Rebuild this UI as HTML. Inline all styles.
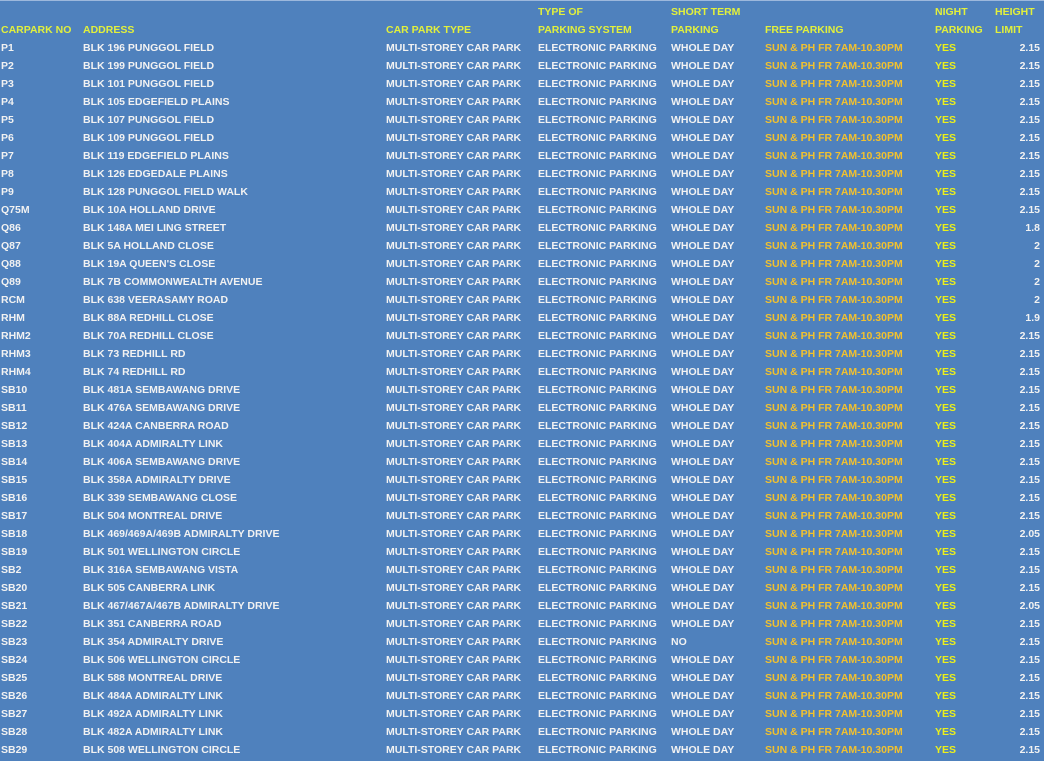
<!DOCTYPE html>
<html><head><meta charset="utf-8"><style>
html,body{margin:0;padding:0}
body{width:1044px;height:761px;background:#4f81bd;overflow:hidden;position:relative;font-family:"Liberation Sans",sans-serif;font-weight:bold;font-size:10.5px;color:#f2f2f2;border-top:1px solid #9db8dc;box-sizing:border-box}
.r{position:absolute;left:0;width:1044px;height:18px;line-height:18px;white-space:nowrap}
.r span{position:absolute;top:2px}
.a{left:1px}.b{left:83px}.c{left:386px}.d{left:538px}.e{left:671px}.f{left:765px;color:#f2c12e}.g{left:935px;color:#ecf01a}.h{right:4px;text-align:right}
.hd span{color:#e2f03c !important}
</style></head><body>
<div class="r hd" style="top:0px"><span class="d">TYPE OF</span><span class="e">SHORT TERM</span><span class="g">NIGHT</span><span class="h" style="left:995px;right:auto">HEIGHT</span></div>
<div class="r hd" style="top:18px"><span class="a">CARPARK NO</span><span class="b">ADDRESS</span><span class="c">CAR PARK TYPE</span><span class="d">PARKING SYSTEM</span><span class="e">PARKING</span><span class="f">FREE PARKING</span><span class="g">PARKING</span><span class="h" style="left:995px;right:auto">LIMIT</span></div>
<div class="r" style="top:36px"><span class="a">P1</span><span class="b">BLK 196 PUNGGOL FIELD</span><span class="c">MULTI-STOREY CAR PARK</span><span class="d">ELECTRONIC PARKING</span><span class="e">WHOLE DAY</span><span class="f">SUN &amp; PH FR 7AM-10.30PM</span><span class="g">YES</span><span class="h">2.15</span></div>
<div class="r" style="top:54px"><span class="a">P2</span><span class="b">BLK 199 PUNGGOL FIELD</span><span class="c">MULTI-STOREY CAR PARK</span><span class="d">ELECTRONIC PARKING</span><span class="e">WHOLE DAY</span><span class="f">SUN &amp; PH FR 7AM-10.30PM</span><span class="g">YES</span><span class="h">2.15</span></div>
<div class="r" style="top:72px"><span class="a">P3</span><span class="b">BLK 101 PUNGGOL FIELD</span><span class="c">MULTI-STOREY CAR PARK</span><span class="d">ELECTRONIC PARKING</span><span class="e">WHOLE DAY</span><span class="f">SUN &amp; PH FR 7AM-10.30PM</span><span class="g">YES</span><span class="h">2.15</span></div>
<div class="r" style="top:90px"><span class="a">P4</span><span class="b">BLK 105 EDGEFIELD PLAINS</span><span class="c">MULTI-STOREY CAR PARK</span><span class="d">ELECTRONIC PARKING</span><span class="e">WHOLE DAY</span><span class="f">SUN &amp; PH FR 7AM-10.30PM</span><span class="g">YES</span><span class="h">2.15</span></div>
<div class="r" style="top:108px"><span class="a">P5</span><span class="b">BLK 107 PUNGGOL FIELD</span><span class="c">MULTI-STOREY CAR PARK</span><span class="d">ELECTRONIC PARKING</span><span class="e">WHOLE DAY</span><span class="f">SUN &amp; PH FR 7AM-10.30PM</span><span class="g">YES</span><span class="h">2.15</span></div>
<div class="r" style="top:126px"><span class="a">P6</span><span class="b">BLK 109 PUNGGOL FIELD</span><span class="c">MULTI-STOREY CAR PARK</span><span class="d">ELECTRONIC PARKING</span><span class="e">WHOLE DAY</span><span class="f">SUN &amp; PH FR 7AM-10.30PM</span><span class="g">YES</span><span class="h">2.15</span></div>
<div class="r" style="top:144px"><span class="a">P7</span><span class="b">BLK 119 EDGEFIELD PLAINS</span><span class="c">MULTI-STOREY CAR PARK</span><span class="d">ELECTRONIC PARKING</span><span class="e">WHOLE DAY</span><span class="f">SUN &amp; PH FR 7AM-10.30PM</span><span class="g">YES</span><span class="h">2.15</span></div>
<div class="r" style="top:162px"><span class="a">P8</span><span class="b">BLK 126 EDGEDALE PLAINS</span><span class="c">MULTI-STOREY CAR PARK</span><span class="d">ELECTRONIC PARKING</span><span class="e">WHOLE DAY</span><span class="f">SUN &amp; PH FR 7AM-10.30PM</span><span class="g">YES</span><span class="h">2.15</span></div>
<div class="r" style="top:180px"><span class="a">P9</span><span class="b">BLK 128 PUNGGOL FIELD WALK</span><span class="c">MULTI-STOREY CAR PARK</span><span class="d">ELECTRONIC PARKING</span><span class="e">WHOLE DAY</span><span class="f">SUN &amp; PH FR 7AM-10.30PM</span><span class="g">YES</span><span class="h">2.15</span></div>
<div class="r" style="top:198px"><span class="a">Q75M</span><span class="b">BLK 10A HOLLAND DRIVE</span><span class="c">MULTI-STOREY CAR PARK</span><span class="d">ELECTRONIC PARKING</span><span class="e">WHOLE DAY</span><span class="f">SUN &amp; PH FR 7AM-10.30PM</span><span class="g">YES</span><span class="h">2.15</span></div>
<div class="r" style="top:216px"><span class="a">Q86</span><span class="b">BLK 148A MEI LING STREET</span><span class="c">MULTI-STOREY CAR PARK</span><span class="d">ELECTRONIC PARKING</span><span class="e">WHOLE DAY</span><span class="f">SUN &amp; PH FR 7AM-10.30PM</span><span class="g">YES</span><span class="h">1.8</span></div>
<div class="r" style="top:234px"><span class="a">Q87</span><span class="b">BLK 5A HOLLAND CLOSE</span><span class="c">MULTI-STOREY CAR PARK</span><span class="d">ELECTRONIC PARKING</span><span class="e">WHOLE DAY</span><span class="f">SUN &amp; PH FR 7AM-10.30PM</span><span class="g">YES</span><span class="h">2</span></div>
<div class="r" style="top:252px"><span class="a">Q88</span><span class="b">BLK 19A QUEEN'S CLOSE</span><span class="c">MULTI-STOREY CAR PARK</span><span class="d">ELECTRONIC PARKING</span><span class="e">WHOLE DAY</span><span class="f">SUN &amp; PH FR 7AM-10.30PM</span><span class="g">YES</span><span class="h">2</span></div>
<div class="r" style="top:270px"><span class="a">Q89</span><span class="b">BLK 7B COMMONWEALTH AVENUE</span><span class="c">MULTI-STOREY CAR PARK</span><span class="d">ELECTRONIC PARKING</span><span class="e">WHOLE DAY</span><span class="f">SUN &amp; PH FR 7AM-10.30PM</span><span class="g">YES</span><span class="h">2</span></div>
<div class="r" style="top:288px"><span class="a">RCM</span><span class="b">BLK 638 VEERASAMY ROAD</span><span class="c">MULTI-STOREY CAR PARK</span><span class="d">ELECTRONIC PARKING</span><span class="e">WHOLE DAY</span><span class="f">SUN &amp; PH FR 7AM-10.30PM</span><span class="g">YES</span><span class="h">2</span></div>
<div class="r" style="top:306px"><span class="a">RHM</span><span class="b">BLK 88A REDHILL CLOSE</span><span class="c">MULTI-STOREY CAR PARK</span><span class="d">ELECTRONIC PARKING</span><span class="e">WHOLE DAY</span><span class="f">SUN &amp; PH FR 7AM-10.30PM</span><span class="g">YES</span><span class="h">1.9</span></div>
<div class="r" style="top:324px"><span class="a">RHM2</span><span class="b">BLK 70A REDHILL CLOSE</span><span class="c">MULTI-STOREY CAR PARK</span><span class="d">ELECTRONIC PARKING</span><span class="e">WHOLE DAY</span><span class="f">SUN &amp; PH FR 7AM-10.30PM</span><span class="g">YES</span><span class="h">2.15</span></div>
<div class="r" style="top:342px"><span class="a">RHM3</span><span class="b">BLK 73 REDHILL RD</span><span class="c">MULTI-STOREY CAR PARK</span><span class="d">ELECTRONIC PARKING</span><span class="e">WHOLE DAY</span><span class="f">SUN &amp; PH FR 7AM-10.30PM</span><span class="g">YES</span><span class="h">2.15</span></div>
<div class="r" style="top:360px"><span class="a">RHM4</span><span class="b">BLK 74 REDHILL RD</span><span class="c">MULTI-STOREY CAR PARK</span><span class="d">ELECTRONIC PARKING</span><span class="e">WHOLE DAY</span><span class="f">SUN &amp; PH FR 7AM-10.30PM</span><span class="g">YES</span><span class="h">2.15</span></div>
<div class="r" style="top:378px"><span class="a">SB10</span><span class="b">BLK 481A SEMBAWANG DRIVE</span><span class="c">MULTI-STOREY CAR PARK</span><span class="d">ELECTRONIC PARKING</span><span class="e">WHOLE DAY</span><span class="f">SUN &amp; PH FR 7AM-10.30PM</span><span class="g">YES</span><span class="h">2.15</span></div>
<div class="r" style="top:396px"><span class="a">SB11</span><span class="b">BLK 476A SEMBAWANG DRIVE</span><span class="c">MULTI-STOREY CAR PARK</span><span class="d">ELECTRONIC PARKING</span><span class="e">WHOLE DAY</span><span class="f">SUN &amp; PH FR 7AM-10.30PM</span><span class="g">YES</span><span class="h">2.15</span></div>
<div class="r" style="top:414px"><span class="a">SB12</span><span class="b">BLK 424A CANBERRA ROAD</span><span class="c">MULTI-STOREY CAR PARK</span><span class="d">ELECTRONIC PARKING</span><span class="e">WHOLE DAY</span><span class="f">SUN &amp; PH FR 7AM-10.30PM</span><span class="g">YES</span><span class="h">2.15</span></div>
<div class="r" style="top:432px"><span class="a">SB13</span><span class="b">BLK 404A ADMIRALTY LINK</span><span class="c">MULTI-STOREY CAR PARK</span><span class="d">ELECTRONIC PARKING</span><span class="e">WHOLE DAY</span><span class="f">SUN &amp; PH FR 7AM-10.30PM</span><span class="g">YES</span><span class="h">2.15</span></div>
<div class="r" style="top:450px"><span class="a">SB14</span><span class="b">BLK 406A SEMBAWANG DRIVE</span><span class="c">MULTI-STOREY CAR PARK</span><span class="d">ELECTRONIC PARKING</span><span class="e">WHOLE DAY</span><span class="f">SUN &amp; PH FR 7AM-10.30PM</span><span class="g">YES</span><span class="h">2.15</span></div>
<div class="r" style="top:468px"><span class="a">SB15</span><span class="b">BLK 358A ADMIRALTY DRIVE</span><span class="c">MULTI-STOREY CAR PARK</span><span class="d">ELECTRONIC PARKING</span><span class="e">WHOLE DAY</span><span class="f">SUN &amp; PH FR 7AM-10.30PM</span><span class="g">YES</span><span class="h">2.15</span></div>
<div class="r" style="top:486px"><span class="a">SB16</span><span class="b">BLK 339 SEMBAWANG CLOSE</span><span class="c">MULTI-STOREY CAR PARK</span><span class="d">ELECTRONIC PARKING</span><span class="e">WHOLE DAY</span><span class="f">SUN &amp; PH FR 7AM-10.30PM</span><span class="g">YES</span><span class="h">2.15</span></div>
<div class="r" style="top:504px"><span class="a">SB17</span><span class="b">BLK 504 MONTREAL DRIVE</span><span class="c">MULTI-STOREY CAR PARK</span><span class="d">ELECTRONIC PARKING</span><span class="e">WHOLE DAY</span><span class="f">SUN &amp; PH FR 7AM-10.30PM</span><span class="g">YES</span><span class="h">2.15</span></div>
<div class="r" style="top:522px"><span class="a">SB18</span><span class="b">BLK 469/469A/469B ADMIRALTY DRIVE</span><span class="c">MULTI-STOREY CAR PARK</span><span class="d">ELECTRONIC PARKING</span><span class="e">WHOLE DAY</span><span class="f">SUN &amp; PH FR 7AM-10.30PM</span><span class="g">YES</span><span class="h">2.05</span></div>
<div class="r" style="top:540px"><span class="a">SB19</span><span class="b">BLK 501 WELLINGTON CIRCLE</span><span class="c">MULTI-STOREY CAR PARK</span><span class="d">ELECTRONIC PARKING</span><span class="e">WHOLE DAY</span><span class="f">SUN &amp; PH FR 7AM-10.30PM</span><span class="g">YES</span><span class="h">2.15</span></div>
<div class="r" style="top:558px"><span class="a">SB2</span><span class="b">BLK 316A SEMBAWANG VISTA</span><span class="c">MULTI-STOREY CAR PARK</span><span class="d">ELECTRONIC PARKING</span><span class="e">WHOLE DAY</span><span class="f">SUN &amp; PH FR 7AM-10.30PM</span><span class="g">YES</span><span class="h">2.15</span></div>
<div class="r" style="top:576px"><span class="a">SB20</span><span class="b">BLK 505 CANBERRA LINK</span><span class="c">MULTI-STOREY CAR PARK</span><span class="d">ELECTRONIC PARKING</span><span class="e">WHOLE DAY</span><span class="f">SUN &amp; PH FR 7AM-10.30PM</span><span class="g">YES</span><span class="h">2.15</span></div>
<div class="r" style="top:594px"><span class="a">SB21</span><span class="b">BLK 467/467A/467B ADMIRALTY DRIVE</span><span class="c">MULTI-STOREY CAR PARK</span><span class="d">ELECTRONIC PARKING</span><span class="e">WHOLE DAY</span><span class="f">SUN &amp; PH FR 7AM-10.30PM</span><span class="g">YES</span><span class="h">2.05</span></div>
<div class="r" style="top:612px"><span class="a">SB22</span><span class="b">BLK 351 CANBERRA ROAD</span><span class="c">MULTI-STOREY CAR PARK</span><span class="d">ELECTRONIC PARKING</span><span class="e">WHOLE DAY</span><span class="f">SUN &amp; PH FR 7AM-10.30PM</span><span class="g">YES</span><span class="h">2.15</span></div>
<div class="r" style="top:630px"><span class="a">SB23</span><span class="b">BLK 354 ADMIRALTY DRIVE</span><span class="c">MULTI-STOREY CAR PARK</span><span class="d">ELECTRONIC PARKING</span><span class="e">NO</span><span class="f">SUN &amp; PH FR 7AM-10.30PM</span><span class="g">YES</span><span class="h">2.15</span></div>
<div class="r" style="top:648px"><span class="a">SB24</span><span class="b">BLK 506 WELLINGTON CIRCLE</span><span class="c">MULTI-STOREY CAR PARK</span><span class="d">ELECTRONIC PARKING</span><span class="e">WHOLE DAY</span><span class="f">SUN &amp; PH FR 7AM-10.30PM</span><span class="g">YES</span><span class="h">2.15</span></div>
<div class="r" style="top:666px"><span class="a">SB25</span><span class="b">BLK 588 MONTREAL DRIVE</span><span class="c">MULTI-STOREY CAR PARK</span><span class="d">ELECTRONIC PARKING</span><span class="e">WHOLE DAY</span><span class="f">SUN &amp; PH FR 7AM-10.30PM</span><span class="g">YES</span><span class="h">2.15</span></div>
<div class="r" style="top:684px"><span class="a">SB26</span><span class="b">BLK 484A ADMIRALTY LINK</span><span class="c">MULTI-STOREY CAR PARK</span><span class="d">ELECTRONIC PARKING</span><span class="e">WHOLE DAY</span><span class="f">SUN &amp; PH FR 7AM-10.30PM</span><span class="g">YES</span><span class="h">2.15</span></div>
<div class="r" style="top:702px"><span class="a">SB27</span><span class="b">BLK 492A ADMIRALTY LINK</span><span class="c">MULTI-STOREY CAR PARK</span><span class="d">ELECTRONIC PARKING</span><span class="e">WHOLE DAY</span><span class="f">SUN &amp; PH FR 7AM-10.30PM</span><span class="g">YES</span><span class="h">2.15</span></div>
<div class="r" style="top:720px"><span class="a">SB28</span><span class="b">BLK 482A ADMIRALTY LINK</span><span class="c">MULTI-STOREY CAR PARK</span><span class="d">ELECTRONIC PARKING</span><span class="e">WHOLE DAY</span><span class="f">SUN &amp; PH FR 7AM-10.30PM</span><span class="g">YES</span><span class="h">2.15</span></div>
<div class="r" style="top:738px"><span class="a">SB29</span><span class="b">BLK 508 WELLINGTON CIRCLE</span><span class="c">MULTI-STOREY CAR PARK</span><span class="d">ELECTRONIC PARKING</span><span class="e">WHOLE DAY</span><span class="f">SUN &amp; PH FR 7AM-10.30PM</span><span class="g">YES</span><span class="h">2.15</span></div>
</body></html>
